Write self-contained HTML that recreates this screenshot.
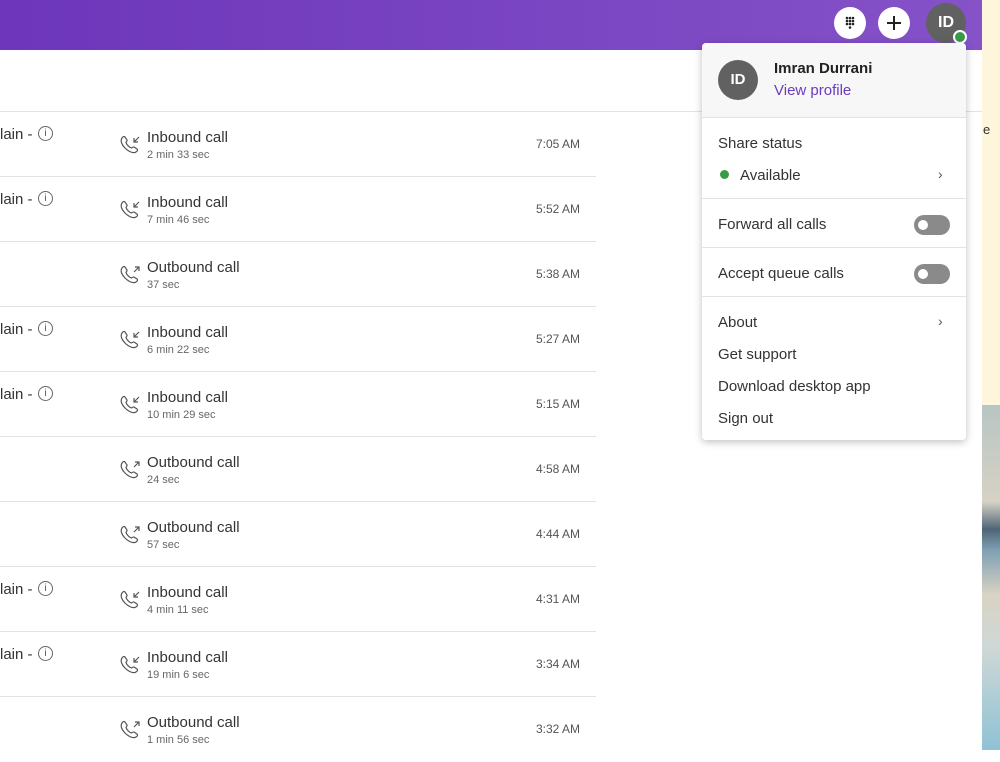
<!DOCTYPE html><html><head><style>
body{margin:0;width:1000px;height:750px;overflow:hidden;position:relative;font-family:"Liberation Sans",sans-serif;background:#fff;color:#333}
.hdr{position:absolute;left:0;top:0;width:982px;height:50px;background:linear-gradient(90deg,#6d36bb,#8552c8)}
.side{position:absolute;left:982px;top:0;width:18px;height:405px;background:#fdf5dc}
.img{position:absolute;left:982px;top:405px;width:18px;height:345px;background:linear-gradient(180deg,#b8c5c4 0,#d6d2c5 28%,#4f6577 36%,#7e9fb3 42%,#d8d3c4 55%,#cfd8d6 70%,#8fc2d6 100%)}
.row{position:absolute;left:0;width:596px;height:65px;border-top:1px solid #e2e2e2}
.l{position:absolute;left:0;top:14px;font-size:15px}
.inf{position:absolute;left:38px;top:14px;width:13px;height:13px;border:1px solid #666;border-radius:50%;font-size:10px;text-align:center;line-height:13px;color:#555}
.ic{position:absolute;left:119px;top:22px}
.t{position:absolute;left:147px;top:17px;font-size:15px;color:#333}
.d{position:absolute;left:147px;top:37px;font-size:11px;color:#666}
.tm{position:absolute;right:16px;top:25px;font-size:12px;color:#555}
.btn{position:absolute;top:7px;width:32px;height:32px;border-radius:50%;background:#fff}
.menu{position:absolute;left:702px;top:43px;width:264px;height:397px;background:#fff;border-radius:4px;box-shadow:0 2px 8px rgba(0,0,0,.25);font-size:15px;color:#333}
.mi{position:absolute;left:16px}
.sep{position:absolute;left:0;width:264px;border-top:1px solid #e2e2e2}
.tg{position:absolute;left:212px;width:36px;height:20px;border-radius:10px;background:#8a8a8a}
.tg:after{content:"";position:absolute;left:4px;top:5px;width:10px;height:10px;border-radius:50%;background:#fff}
.chev{position:absolute;left:236px;font-size:14px;color:#555}
</style></head><body>
<div class="hdr"></div><div class="side"></div><div class="img"></div>
<div style="position:absolute;left:983px;top:122px;font-size:13px">e</div>
<div style="position:absolute;left:0;top:111px;width:982px;border-top:1px solid #e2e2e2"></div>
<div class="btn" style="left:834px"><svg width="32" height="32"><g fill="#222"><circle cx="13" cy="11" r="1.3"/><circle cx="16" cy="11" r="1.3"/><circle cx="19" cy="11" r="1.3"/><circle cx="13" cy="14" r="1.3"/><circle cx="16" cy="14" r="1.3"/><circle cx="19" cy="14" r="1.3"/><circle cx="13" cy="17" r="1.3"/><circle cx="16" cy="17" r="1.3"/><circle cx="19" cy="17" r="1.3"/><circle cx="16" cy="20.5" r="1.3"/></g></svg></div>
<div class="btn" style="left:878px"><svg width="32" height="32"><path d="M16 9v14M9 16h14" stroke="#222" stroke-width="2"/></svg></div>
<div style="position:absolute;left:926px;top:3px;width:40px;height:40px;border-radius:50%;background:#616161;color:#fff;font-weight:bold;font-size:16px;text-align:center;line-height:40px">ID</div>
<div style="position:absolute;left:953px;top:30px;width:10px;height:10px;border-radius:50%;background:#3a9a48;border:2px solid #fff"></div>

<div id="rows"></div>
<script>
var d=[["Inbound call","2 min 33 sec","7:05 AM",1],["Inbound call","7 min 46 sec","5:52 AM",1],["Outbound call","37 sec","5:38 AM",0],["Inbound call","6 min 22 sec","5:27 AM",1],["Inbound call","10 min 29 sec","5:15 AM",1],["Outbound call","24 sec","4:58 AM",0],["Outbound call","57 sec","4:44 AM",0],["Inbound call","4 min 11 sec","4:31 AM",1],["Inbound call","19 min 6 sec","3:34 AM",1],["Outbound call","1 min 56 sec","3:32 AM",0]];
var h="";d.forEach(function(r,i){var y=111+i*65;
var ar=r[3]?'<path d="M20 3l-5 5M15 4v4h4" stroke="#555" fill="none" stroke-width="1.2"/>':'<path d="M15 8l5-5M16 3h4v4" stroke="#555" fill="none" stroke-width="1.2"/>';
h+='<div class="row" style="top:'+y+'px">'+(r[3]?'<div class="l">lain -</div><div class="inf">i</div>':'')+
'<svg class="ic" width="22" height="22"><path d="M3 4c1-1.5 2-2 3-1l2 3c.5 1-1 2-1 2.5 1 2.5 3 4.5 5.5 5.5.5 0 1.5-1.5 2.5-1l3 2c1 1 .5 2-1 3-3 2-8-1-11-4S1 7 3 4z" stroke="#555" fill="none" stroke-width="1.2"/>'+ar+'</svg>'+
'<div class="t">'+r[0]+'</div><div class="d">'+r[1]+'</div><div class="tm">'+r[2]+'</div></div>';});
document.getElementById("rows").innerHTML=h;
</script>

<div class="menu">
<div style="position:absolute;left:0;top:0;width:264px;height:74px;background:#f7f7f7;border-radius:4px 4px 0 0"></div>
<div style="position:absolute;left:16px;top:17px;width:40px;height:40px;border-radius:50%;background:#616161;color:#fff;font-weight:bold;font-size:15px;text-align:center;line-height:40px">ID</div>
<div style="position:absolute;left:72px;top:17px;font-weight:bold;font-size:15px;color:#222">Imran Durrani</div>
<div style="position:absolute;left:72px;top:39px;color:#6c3bbf">View profile</div>
<div class="sep" style="top:74px"></div>
<div class="mi" style="top:92px">Share status</div>
<div style="position:absolute;left:18px;top:127px;width:9px;height:9px;border-radius:50%;background:#3a9a48"></div>
<div class="mi" style="left:38px;top:124px">Available</div><div class="chev" style="top:123px">›</div>
<div class="sep" style="top:155px"></div>
<div class="mi" style="top:173px">Forward all calls</div><div class="tg" style="top:172px"></div>
<div class="sep" style="top:204px"></div>
<div class="mi" style="top:222px">Accept queue calls</div><div class="tg" style="top:221px"></div>
<div class="sep" style="top:253px"></div>
<div class="mi" style="top:271px">About</div><div class="chev" style="top:270px">›</div>
<div class="mi" style="top:303px">Get support</div>
<div class="mi" style="top:335px">Download desktop app</div>
<div class="mi" style="top:367px">Sign out</div>
</div>
</body></html>
